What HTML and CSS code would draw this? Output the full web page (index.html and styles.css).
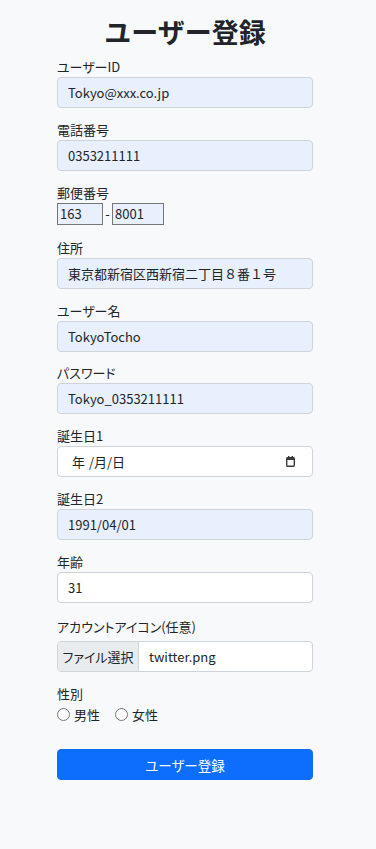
FILE: index.html
```html
<!DOCTYPE html>
<html lang="ja">
<head>
<meta charset="utf-8">
<title>ユーザー登録</title>
<link rel="stylesheet" href="styles.css">
</head>
<body>
<main class="page">
  <h1 class="title">ユーザー登録</h1>
  <form class="form">
    <div class="field">
      <label class="lbl">ユーザーID</label>
      <input class="ctl auto" type="text" value="Tokyo@xxx.co.jp">
    </div>
    <div class="field">
      <label class="lbl">電話番号</label>
      <input class="ctl auto" type="text" value="0353211111">
    </div>
    <div class="field">
      <label class="lbl">郵便番号</label>
      <div class="postal">
        <input class="zip zip1" type="text" value="163">
        <span class="dash">-</span>
        <input class="zip zip2" type="text" value="8001">
      </div>
    </div>
    <div class="field">
      <label class="lbl">住所</label>
      <input class="ctl auto" type="text" value="東京都新宿区西新宿二丁目８番１号">
    </div>
    <div class="field">
      <label class="lbl">ユーザー名</label>
      <input class="ctl auto" type="text" value="TokyoTocho">
    </div>
    <div class="field">
      <label class="lbl">パスワード</label>
      <input class="ctl auto" type="text" value="Tokyo_0353211111">
    </div>
    <div class="field">
      <label class="lbl">誕生日1</label>
      <div class="ctl date">
        <span class="date-text">年 /月/日</span>
        <svg class="cal" width="9" height="11" viewBox="0 0 9 11" aria-hidden="true">
          <rect x="2" y="0" width="1.4" height="2" fill="#3a3a3a"/>
          <rect x="5.6" y="0" width="1.4" height="2" fill="#3a3a3a"/>
          <rect x="0.7" y="1.7" width="7.6" height="8.6" rx="1" fill="none" stroke="#3a3a3a" stroke-width="1.4"/>
          <rect x="0.7" y="1.7" width="7.6" height="2.3" fill="#3a3a3a"/>
        </svg>
      </div>
    </div>
    <div class="field">
      <label class="lbl">誕生日2</label>
      <input class="ctl auto" type="text" value="1991/04/01">
    </div>
    <div class="field">
      <label class="lbl">年齢</label>
      <input class="ctl" type="text" value="31">
    </div>
    <div class="field field-file">
      <label class="lbl lbl-file">アカウントアイコン(任意)</label>
      <div class="ctl file">
        <span class="file-btn">ファイル選択</span>
        <span class="file-name">twitter.png</span>
      </div>
    </div>
    <div class="field field-radio">
      <label class="lbl">性別</label>
      <div class="radios">
        <label class="radio"><input type="radio" name="sex" class="rad"><span>男性</span></label>
        <label class="radio"><input type="radio" name="sex" class="rad"><span>女性</span></label>
      </div>
    </div>
    <button type="button" class="btn">ユーザー登録</button>
  </form>
</main>
</body>
</html>
```
FILE: styles.css
```css
html, body {
  margin: 0;
  padding: 0;
}
body {
  background: #f8f9fa;
  color: #212529;
  font-family: "Noto Sans CJK JP", "Noto Sans", sans-serif;
  font-size: 13px;
}
.page {
  width: 256px;
  padding: 15px 0 40px 57px;
}
.title {
  margin: 0 0 8px;
  font-size: 27px;
  line-height: 33px;
  font-weight: 700;
  text-align: center;
  color: #212529;
}
.form {
  display: flex;
  flex-direction: column;
}
.field {
  display: flex;
  flex-direction: column;
  margin-bottom: 10.75px;
}
.lbl {
  display: block;
  font-size: 13px;
  line-height: 21px;
  font-feature-settings: "palt";
}
.lbl-file {
  line-height: 27.5px;
}
.field-file {
  margin-bottom: 11.5px;
}
.ctl {
  box-sizing: border-box;
  width: 256px;
  height: 31px;
  margin: 0;
  padding: 0 10px;
  border: 1px solid #ced4da;
  border-radius: 4px;
  background: #fff;
  color: #212529;
  font-family: "Noto Sans CJK JP", "Noto Sans", sans-serif;
  font-size: 13px;
  outline: none;
}
.auto {
  background: #e8f0fe;
}
.postal {
  display: flex;
  align-items: flex-start;
  height: 23.5px;
}
.zip {
  box-sizing: border-box;
  height: 22px;
  margin: 0;
  padding: 1px 2px;
  border: 1px solid #767676;
  border-radius: 0;
  background: #e8f0fe;
  color: #212529;
  font-family: "Noto Sans CJK JP", "Noto Sans", sans-serif;
  font-size: 13px;
  outline: none;
}
.zip1 { width: 46px; }
.zip2 { width: 52px; }
.dash {
  width: 9px;
  text-align: center;
  line-height: 22px;
  font-size: 13px;
}
.date {
  display: flex;
  align-items: center;
  justify-content: space-between;
  padding: 0 17px 0 14px;
}
.date-text {
  font-feature-settings: "palt";
  word-spacing: 1px;
}
.cal {
  display: block;
}
.file {
  display: flex;
  align-items: stretch;
  padding: 0;
  overflow: hidden;
}
.file-btn {
  display: flex;
  align-items: center;
  justify-content: center;
  flex: 0 0 81px;
  box-sizing: border-box;
  padding: 0;
  background: #e9ecef;
  border-right: 1px solid #ced4da;
  font-feature-settings: "palt";
  white-space: nowrap;
}
.file-name {
  display: flex;
  align-items: center;
  padding-left: 10px;
  white-space: nowrap;
}
.field-radio {
  margin-bottom: 24px;
}
.radios {
  display: flex;
  align-items: center;
  height: 21px;
}
.radio {
  display: inline-flex;
  align-items: center;
  gap: 4px;
  margin-right: 15px;
  line-height: 21px;
}
.rad {
  width: 13px;
  height: 13px;
  margin: 0;
}
.btn {
  box-sizing: border-box;
  width: 256px;
  height: 31px;
  margin: 0;
  border: 1px solid #0d6efd;
  border-radius: 4px;
  background: #0d6efd;
  color: #fff;
  font-family: "Noto Sans CJK JP", "Noto Sans", sans-serif;
  font-size: 13.5px;
  font-feature-settings: "palt";
  cursor: pointer;
}
```
